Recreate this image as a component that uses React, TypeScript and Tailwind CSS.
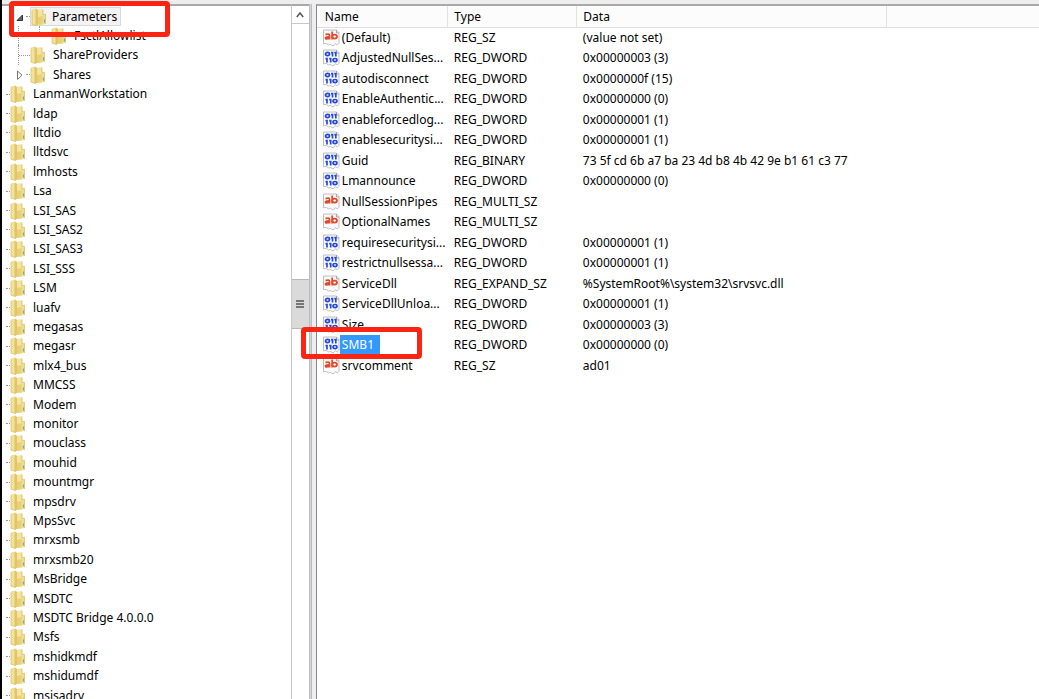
import React, { useState } from "react";

type RegValue = {
  name: string;
  type: string;
  data: string;
};

const subKeys = [
  "LanmanWorkstation", "ldap", "lltdio", "lltdsvc", "lmhosts", "Lsa", "LSI_SAS", "LSI_SAS2",
  "LSI_SAS3", "LSI_SSS", "LSM", "luafv", "megasas", "megasr", "mlx4_bus", "MMCSS", "Modem",
  "monitor", "mouclass", "mouhid", "mountmgr", "mpsdrv", "MpsSvc", "mrxsmb", "mrxsmb20",
  "MsBridge", "MSDTC", "MSDTC Bridge 4.0.0.0", "Msfs", "mshidkmdf", "mshidumdf", "msisadrv",
];

const values: RegValue[] = [
  { name: "(Default)", type: "REG_SZ", data: "(value not set)" },
  { name: "AdjustedNullSes...", type: "REG_DWORD", data: "0x00000003 (3)" },
  { name: "autodisconnect", type: "REG_DWORD", data: "0x0000000f (15)" },
  { name: "EnableAuthentic...", type: "REG_DWORD", data: "0x00000000 (0)" },
  { name: "enableforcedlog...", type: "REG_DWORD", data: "0x00000001 (1)" },
  { name: "enablesecuritysi...", type: "REG_DWORD", data: "0x00000001 (1)" },
  { name: "Guid", type: "REG_BINARY", data: "73 5f cd 6b a7 ba 23 4d b8 4b 42 9e b1 61 c3 77" },
  { name: "Lmannounce", type: "REG_DWORD", data: "0x00000000 (0)" },
  { name: "NullSessionPipes", type: "REG_MULTI_SZ", data: "" },
  { name: "OptionalNames", type: "REG_MULTI_SZ", data: "" },
  { name: "requiresecuritysi...", type: "REG_DWORD", data: "0x00000001 (1)" },
  { name: "restrictnullsessa...", type: "REG_DWORD", data: "0x00000001 (1)" },
  { name: "ServiceDll", type: "REG_EXPAND_SZ", data: "%SystemRoot%\\system32\\srvsvc.dll" },
  { name: "ServiceDllUnloa...", type: "REG_DWORD", data: "0x00000001 (1)" },
  { name: "Size", type: "REG_DWORD", data: "0x00000003 (3)" },
  { name: "SMB1", type: "REG_DWORD", data: "0x00000000 (0)" },
  { name: "srvcomment", type: "REG_SZ", data: "ad01" },
];

function FolderIcon() {
  return (
    <svg className="h-[18px] w-4 shrink-0" viewBox="0 0 16 18" aria-hidden="true">
      <path d="M6 2 12 1.500v15L6 17z" fill="#e9cf78" />
      <path d="M12 6.500l2.500-.3v9.800L11 16.500z" fill="#efdc8e" />
      <path d="M1 2.200Q1 1 2.500 1l3.500-.5v17l-5-1.300z" fill="#f3e29a" />
      <path d="M4.500.8 7 1.800v14.500l-1.500 1.400-1-.4z" fill="#e2c468" />
      <path d="M7 2.200l4.500-.6v14L7 16.500z" fill="#f4e4a2" />
      <path d="M7 9l4.500-1v7.600L7 16.500z" fill="#e9cf76" />
      <path d="M1 2.200v14l4.500 1.300M12 1.500v5l2.500-.3V16" stroke="#d9bd62" strokeWidth=".7" fill="none" />
      <path d="M13.500 11.500v3" stroke="#74aaa0" strokeWidth="1.200" />
    </svg>
  );
}

function Page() {
  return (
    <>
      <path d="M.5 1h13L16 3.500v10.800l-1.500 1.500-2-1L10 17l-2.500-1.500-2 .5-2-1.500-3 .3z" fill="#fafafa" stroke="#b8b8b8" strokeWidth=".9" />
      <path d="M13.500 1v3H16" fill="#e6e6e6" stroke="#999" strokeWidth=".8" />
    </>
  );
}

function StringIcon() {
  return (
    <svg className="h-[18px] w-[17px] shrink-0" viewBox="0 0 17 18" aria-hidden="true">
      <Page />
      <g fill="none" stroke="#dc4c2c" strokeWidth="1.800">
        <path d="M2.500 5.600q4-1.300 4 1v3.800" />
        <path d="M6.300 7.800c-4.800 0-4.300 2-2.700 2 1.300 0 2.500-.6 2.700-1.300" />
        <path d="M9.200 2.500v8" />
        <ellipse cx="11.600" cy="7.600" rx="2.400" ry="2" />
      </g>
    </svg>
  );
}

function BinaryIcon() {
  return (
    <svg className="h-[18px] w-[17px] shrink-0" viewBox="0 0 17 18" aria-hidden="true">
      <Page />
      <g fill="none" stroke="#2549e0" strokeWidth="1.700">
        <ellipse cx="4.500" cy="5" rx="2" ry="1.600" />
        <path d="M8 3.600h1.500v3.800M11.300 3.600h1.500v3.800" />
        <path d="M2.500 9.600H4v3.800M6.200 9.600h1.500v3.800" />
        <ellipse cx="12" cy="11.100" rx="2" ry="1.600" />
      </g>
    </svg>
  );
}

function TreeRow({ children }: { children: React.ReactNode }) {
  return (
    <li className="flex h-[19px] items-center whitespace-nowrap nth-[5n]:h-5 nth-[5n+3]:h-5">{children}</li>
  );
}

export default function App() {
  const [selected, setSelected] = useState("SMB1");

  return (
    <div className="flex h-screen flex-col overflow-hidden border-l-2 border-black bg-[#eeeeee] font-['Noto_Sans','Open_Sans',sans-serif] text-[12px] leading-4 text-black">
      <div className="h-1 shrink-0" />
      <div className="flex min-h-0 flex-1">
        <nav aria-label="Registry keys" className="relative min-w-0 flex-[3_1_0] border-t-2 border-[#a9a9ac] bg-white">
          <ul className="pt-px">
            <TreeRow>
              <button aria-label="Collapse Parameters" className="ml-3 w-3">
                <svg className="h-3 w-3" viewBox="0 0 12 12"><path d="M8.500 4v5.500H3z" fill="#666" stroke="#333" /></svg>
              </button>
              <span className="w-1 border-t border-dotted border-[#999]" />
              <span className="flex h-[19px] items-center gap-[5px] border border-[#d9d9d9] bg-[#f3f3f3] pr-[3px]"><FolderIcon />Parameters</span>
            </TreeRow>
            <TreeRow>
              <span className="ml-4 h-full border-l border-dotted border-[#999]" />
              <span className="ml-5 h-1/2 w-3 self-start border-b border-l border-dotted border-[#999]" />
              <span className="flex items-center gap-[7px]"><FolderIcon />FsctlAllowlist</span>
            </TreeRow>
            <TreeRow>
              <span className="ml-4 h-full border-l border-dotted border-[#999]" />
              <span className="w-[11px] border-t border-dotted border-[#999]" />
              <span className="flex items-center gap-[7px]"><FolderIcon />ShareProviders</span>
            </TreeRow>
            <TreeRow>
              <button aria-label="Expand Shares" className="ml-3 w-3">
                <svg className="h-3 w-3" viewBox="0 0 12 12"><path d="M3.500 2v8.500L8 6.200z" fill="#fff" stroke="#777" /></svg>
              </button>
              <span className="w-1 border-t border-dotted border-[#999]" />
              <span className="flex items-center gap-[7px]"><FolderIcon />Shares</span>
            </TreeRow>
            {subKeys.map((key) => (
              <TreeRow key={key}>
                <span className="ml-1 w-1 border-t border-dotted border-[#999]" />
                <span className="flex items-center gap-[7px]"><FolderIcon />{key}</span>
              </TreeRow>
            ))}
          </ul>
          <div className="pointer-events-none absolute -top-[5px] left-[7px] h-9 w-[161px] rounded border-[5px] border-[#fe2414]" />
        </nav>

        <div className="flex w-[18px] shrink-0 flex-col border-l border-t-2 border-l-[#c8c8c8] border-t-[#a9a9ac] bg-white">
          <button aria-label="Scroll up" className="flex h-[18px] items-center justify-center border-b border-[#c8c8c8]">
            <svg className="h-2 w-2" viewBox="0 0 8 8"><path d="M.8 6 4 2l3.200 4" fill="none" stroke="#555" strokeWidth="1.500" /></svg>
          </button>
          <div className="flex-[255_1_0]" />
          <div className="flex h-[50px] items-center justify-center border-y border-[#b8b8b8] bg-[#dadada]">
            <svg className="h-2 w-2" viewBox="0 0 8 8"><path d="M0 1h8M0 4h8M0 7h8" stroke="#555" strokeWidth="1.500" /></svg>
          </div>
          <div className="flex-[369_1_0]" />
        </div>
        <div className="w-[3px] shrink-0 border-x border-[#bdbdc0] bg-[#d4d4d6]" />
        <div className="w-1 shrink-0" />

        <main className="relative min-w-0 flex-[7.500_1_0] border-l border-t-2 border-l-[#828790] border-t-[#a9a9ac] bg-white">
          <table className="w-full table-fixed border-collapse text-left">
            <thead>
              <tr className="h-[21px] border-b border-[#dedede] bg-[#fcfcfc]">
                <th className="w-[131px] border-r border-[#e2e2e2] p-0 pl-2 pt-px font-normal">Name</th>
                <th className="w-[129px] border-r border-[#e2e2e2] p-0 pl-[6px] pt-px font-normal">Type</th>
                <th className="w-[310px] border-r border-[#e2e2e2] p-0 pl-[6px] pt-px font-normal">Data</th>
                <td />
              </tr>
            </thead>
            <tbody>
              {values.map((v) => (
                <tr key={v.name} onClick={() => setSelected(v.name)} className="h-5 whitespace-nowrap even:h-[21px]">
                  <td className="p-0 pl-[6px]">
                    <div className="flex h-5 items-center">
                      {v.type.endsWith("SZ") ? <StringIcon /> : <BinaryIcon />}
                      <span className={selected === v.name ? "flex h-5 items-center bg-[#3399ff] pl-[2px] pr-[6px] text-white" : "pl-[2px]"}>{v.name}</span>
                    </div>
                  </td>
                  <td className="p-0 pl-[6px]">{v.type}</td>
                  <td className="p-0 pl-[6px]">{v.data}</td>
                  <td />
                </tr>
              ))}
            </tbody>
          </table>
          <div className="pointer-events-none absolute -left-4 top-[321px] h-8 w-[121px] rounded border-[5px] border-[#fe2414]" />
        </main>
      </div>
    </div>
  );
}
